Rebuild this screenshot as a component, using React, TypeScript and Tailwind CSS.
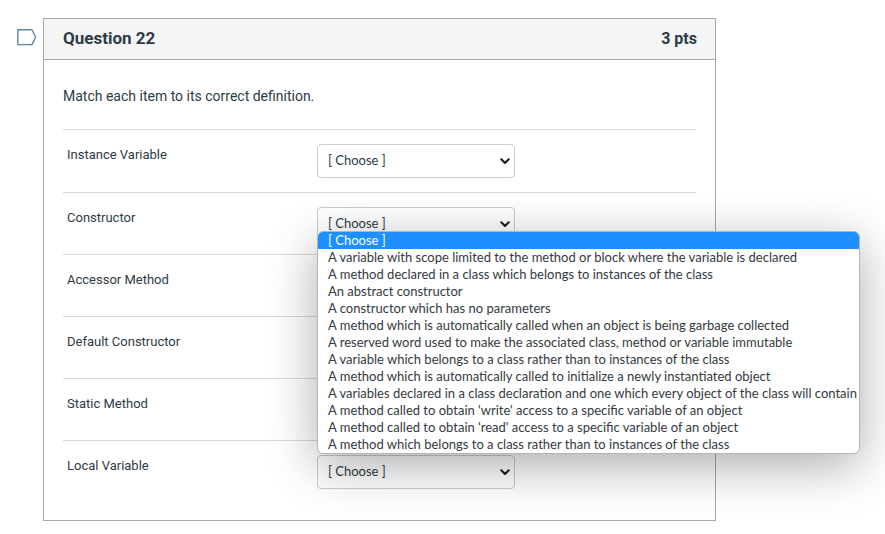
import { useState } from "react";

const items = [
  "Instance Variable",
  "Constructor",
  "Accessor Method",
  "Default Constructor",
  "Static Method",
  "Local Variable",
];

const options = [
  "[ Choose ]",
  "A variable with scope limited to the method or block where the variable is declared",
  "A method declared in a class which belongs to instances of the class",
  "An abstract constructor",
  "A constructor which has no parameters",
  "A method which is automatically called when an object is being garbage collected",
  "A reserved word used to make the associated class, method or variable immutable",
  "A variable which belongs to a class rather than to instances of the class",
  "A method which is automatically called to initialize a newly instantiated object",
  "A variables declared in a class declaration and one which every object of the class will contain",
  "A method called to obtain 'write' access to a specific variable of an object",
  "A method called to obtain 'read' access to a specific variable of an object",
  "A method which belongs to a class rather than to instances of the class",
];

function Chevron() {
  return (
    <svg
      width="10"
      height="7"
      viewBox="0 0 10 7"
      className="pointer-events-none absolute right-[5px] top-[14px]"
    >
      <path
        d="M1.3 1.3 L5 5 L8.7 1.3"
        fill="none"
        stroke="#222"
        strokeWidth="2.2"
        strokeLinecap="round"
        strokeLinejoin="round"
      />
    </svg>
  );
}

function ChooseSelect({ open }: { open?: boolean }) {
  return (
    <div className="relative mt-[14px] h-[34px] w-[198px]">
      <select
        className="h-full w-full appearance-none rounded-[4px] border border-[#c7cdd1] bg-white pl-[10px] text-[13px] text-[#2d3b45] outline-none"
        style={{ fontFamily: "Lato, 'Liberation Sans', sans-serif" }}
        defaultValue=""
      >
        <option value="">[ Choose ]</option>
      </select>
      <Chevron />
      {open && (
        <ul
          className="absolute left-0 top-[24px] z-10 w-[543px] overflow-hidden rounded-[6px] border border-[#b5b5b5] bg-white shadow-[0_12px_50px_rgba(0,0,0,0.33)]"
          style={{ fontFamily: "Lato, 'Liberation Sans', sans-serif" }}
        >
          {options.map((o, i) => (
            <li
              key={i}
              className={
                i === 0
                  ? "h-[17px] whitespace-nowrap bg-[#1e8fff] pl-[10px] text-[13px] leading-[17px] text-white"
                  : "h-[17px] whitespace-nowrap pl-[10px] text-[13px] leading-[17px] text-[#333a40]"
              }
            >
              {o}
            </li>
          ))}
        </ul>
      )}
    </div>
  );
}

export default function App() {
  const [openRow] = useState(1);

  return (
    <div
      className="flex min-h-[534px] w-[885px] bg-white pt-[18px] text-[#2d3b45]"
      style={{ fontFamily: "Roboto, 'Liberation Sans', sans-serif" }}
    >
      <div className="w-[43px] shrink-0 pl-[17px] pt-[11px]">
        <svg width="20" height="17" viewBox="0 0 20 17">
          <path
            d="M0.8 0.8 H15 L18.6 8 L15 15.6 H0.8 Z"
            fill="none"
            stroke="#5f86a3"
            strokeWidth="1.4"
            strokeLinejoin="round"
          />
        </svg>
      </div>

      <div className="h-[503px] w-[673px] shrink-0 border border-[#a8a8a8]">
        <div className="flex h-[41px] items-center justify-between border-b border-[#a8a8a8] bg-[#f5f5f5] pl-[19px] pr-[18px]">
          <h2 className="text-[17px] font-bold">Question 22</h2>
          <span className="text-[16px] font-bold">3 pts</span>
        </div>

        <div className="px-[19px] pt-[26px]">
          <p className="mb-[23px] text-[14px] leading-[20px]">
            Match each item to its correct definition.
          </p>

          {items.map((label, i) => (
            <div
              key={label}
              className={
                i === 0
                  ? "flex h-[63px] border-t border-[#dadada]"
                  : "flex h-[62px] border-t border-[#dadada]"
              }
            >
              <div className="w-[254px] pl-[4px] pt-[17px] text-[13px] leading-[16px]">
                {label}
              </div>
              <ChooseSelect open={i === openRow} />
            </div>
          ))}
        </div>
      </div>
    </div>
  );
}
